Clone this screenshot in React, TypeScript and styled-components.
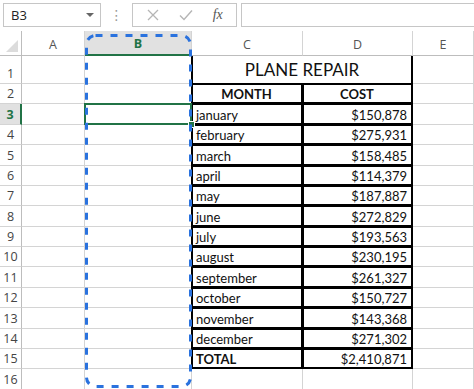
import React from "react";
import styled, { createGlobalStyle, css } from "styled-components";

const GRID = "#d4d4d4";
const GREEN = "#217346";
const UI_FONT = `"Open Sans", "Noto Sans", sans-serif`;
const CELL_FONT = `Lato, "Open Sans", sans-serif`;

const GlobalStyle = createGlobalStyle`
  html, body {
    margin: 0;
    padding: 0;
    background: #fff;
    overflow: hidden;
  }
`;

const Frame = styled.div`
  width: 474px;
  height: 389px;
  overflow: hidden;
  background: #fff;
`;

const FormulaBar = styled.div`
  display: flex;
  align-items: flex-start;
  height: 31px;
  padding: 3px 0 0 3px;
  box-sizing: border-box;
`;

const NameBox = styled.div`
  display: flex;
  align-items: center;
  justify-content: space-between;
  width: 98px;
  height: 24px;
  box-sizing: border-box;
  border: 1px solid #c6c6c6;
  padding: 0 6px 0 7px;
  font-family: ${UI_FONT};
  font-size: 13px;
  color: #222;
`;

const Caret = styled.span`
  width: 0;
  height: 0;
  border-left: 4px solid transparent;
  border-right: 4px solid transparent;
  border-top: 4px solid #666;
`;

const Grip = styled.div`
  width: 31px;
  height: 24px;
  display: flex;
  align-items: center;
  justify-content: center;
  color: #9a9a9a;
  font-size: 14px;
  font-family: "DejaVu Sans", sans-serif;
`;

const FxBox = styled.div`
  display: flex;
  align-items: center;
  justify-content: space-around;
  width: 105px;
  height: 24px;
  box-sizing: border-box;
  border: 1px solid #c6c6c6;
  padding: 0 4px;
`;

const FxLabel = styled.span`
  font-family: "Liberation Serif", serif;
  font-style: italic;
  font-size: 14px;
  color: #555;
`;

const FormulaInput = styled.div`
  flex: 1;
  height: 24px;
  margin-left: 4px;
  box-sizing: border-box;
  border: 1px solid #c6c6c6;
  border-right: none;
`;

const Sheet = styled.div`
  position: relative;
`;

const Row = styled.div<{ $h: number }>`
  display: grid;
  grid-template-columns: 22px 63px 107px 111px 110px 1fr;
  height: ${(p) => p.$h}px;
`;

const Cell = styled.div`
  position: relative;
  box-sizing: border-box;
  border-right: 1px solid ${GRID};
  border-bottom: 1px solid ${GRID};
`;

const Corner = styled(Cell)`
  border-right-color: #bdbdbd;
  border-bottom-color: #bdbdbd;
  &::after {
    content: "";
    position: absolute;
    right: 3px;
    bottom: 3px;
    width: 12px;
    height: 12px;
    background: #dcdcdc;
    clip-path: polygon(100% 0, 100% 100%, 0 100%);
  }
`;

const ColHead = styled(Cell)<{ $active?: boolean }>`
  display: flex;
  align-items: center;
  justify-content: center;
  padding-top: 2px;
  font-family: ${UI_FONT};
  font-size: 12.5px;
  color: #555;
  border-bottom-color: #bdbdbd;
  ${(p) =>
    p.$active &&
    css`
      background: #e1e1e1;
      color: ${GREEN};
      font-weight: 700;
      border-bottom: 2px solid ${GREEN};
    `}
`;

const RowHead = styled(Cell)<{ $active?: boolean }>`
  display: flex;
  align-items: flex-end;
  justify-content: center;
  padding-bottom: 1px;
  font-family: ${UI_FONT};
  font-size: 12.5px;
  color: #444;
  border-right-color: #bdbdbd;
  ${(p) =>
    p.$active &&
    css`
      background: #e1e1e1;
      color: ${GREEN};
      font-weight: 700;
      border-right: 2px solid ${GREEN};
    `}
`;

const Selected = styled(Cell)`
  &::after {
    content: "";
    position: absolute;
    inset: -1px -1px -1px -1px;
    border: 2px solid ${GREEN};
    z-index: 2;
  }
  &::before {
    content: "";
    position: absolute;
    right: -4px;
    bottom: -4px;
    width: 5px;
    height: 5px;
    background: ${GREEN};
    border: 1px solid #fff;
    z-index: 3;
  }
`;

const Title = styled(Cell)`
  grid-column: span 2;
  display: flex;
  align-items: flex-end;
  justify-content: center;
  padding-bottom: 3px;
  font-family: ${CELL_FONT};
  font-size: 17px;
  color: #111;
  &::after {
    content: "";
    position: absolute;
    top: 0;
    bottom: -1px;
    left: -1px;
    right: -1px;
    border-left: 2px solid #000;
    border-right: 2px solid #000;
    z-index: 1;
  }
`;

const DataCell = styled(Cell)<{ $align?: "left" | "right" | "center"; $bold?: boolean }>`
  display: flex;
  align-items: flex-end;
  justify-content: ${(p) =>
    p.$align === "right" ? "flex-end" : p.$align === "center" ? "center" : "flex-start"};
  padding: 0 5px 1px 4px;
  font-family: ${CELL_FONT};
  font-size: 13px;
  font-weight: ${(p) => (p.$bold ? 700 : 400)};
  color: #111;
  white-space: nowrap;
  &::after {
    content: "";
    position: absolute;
    inset: -1px;
    border: 2px solid #000;
    z-index: 1;
  }
`;

const Marquee = styled.svg`
  position: absolute;
  left: 0;
  top: 0;
  z-index: 4;
  pointer-events: none;
`;

const months: [string, string][] = [
  ["january", "$150,878"],
  ["february", "$275,931"],
  ["march", "$158,485"],
  ["april", "$114,379"],
  ["may", "$187,887"],
  ["june", "$272,829"],
  ["july", "$193,563"],
  ["august", "$230,195"],
  ["september", "$261,327"],
  ["october", "$150,727"],
  ["november", "$143,368"],
  ["december", "$271,302"],
];

const ROW_H = 20.38;

const App = () => {
  return (
    <Frame>
      <GlobalStyle />
      <FormulaBar>
        <NameBox>
          B3
          <Caret />
        </NameBox>
        <Grip>⋮</Grip>
        <FxBox>
          <svg width="14" height="14" viewBox="0 0 14 14">
            <path d="M2 2 L12 12 M12 2 L2 12" stroke="#b5b5b5" strokeWidth="1.3" fill="none" />
          </svg>
          <svg width="16" height="14" viewBox="0 0 16 14">
            <path d="M2 7.5 L6 11.5 L14 2.5" stroke="#b5b5b5" strokeWidth="1.4" fill="none" />
          </svg>
          <FxLabel>fx</FxLabel>
        </FxBox>
        <FormulaInput />
      </FormulaBar>

      <Sheet>
        <Row $h={25}>
          <Corner />
          <ColHead>A</ColHead>
          <ColHead $active>B</ColHead>
          <ColHead>C</ColHead>
          <ColHead>D</ColHead>
          <ColHead>E</ColHead>
        </Row>
        <Row $h={28}>
          <RowHead>1</RowHead>
          <Cell />
          <Cell />
          <Title>PLANE REPAIR</Title>
          <Cell />
        </Row>
        <Row $h={ROW_H}>
          <RowHead>2</RowHead>
          <Cell />
          <Cell />
          <DataCell $align="center" $bold>MONTH</DataCell>
          <DataCell $align="center" $bold>COST</DataCell>
          <Cell />
        </Row>
        {months.map(([m, cost], i) => (
          <Row $h={ROW_H} key={m}>
            <RowHead $active={i === 0}>{i + 3}</RowHead>
            <Cell />
            {i === 0 ? <Selected /> : <Cell />}
            <DataCell>{m}</DataCell>
            <DataCell $align="right">{cost}</DataCell>
            <Cell />
          </Row>
        ))}
        <Row $h={ROW_H}>
          <RowHead>15</RowHead>
          <Cell />
          <Cell />
          <DataCell $bold>TOTAL</DataCell>
          <DataCell $align="right">$2,410,871</DataCell>
          <Cell />
        </Row>
        <Row $h={ROW_H}>
          <RowHead>16</RowHead>
          <Cell />
          <Cell />
          <Cell />
          <Cell />
          <Cell />
        </Row>

        <Marquee width="474" height="358" viewBox="0 0 474 358">
          <rect
            x="86.5"
            y="4.5"
            width="104"
            height="351"
            rx="9"
            fill="none"
            stroke="#2a72de"
            strokeWidth="3"
            strokeDasharray="7 8"
          />
        </Marquee>
      </Sheet>
    </Frame>
  );
};

export default App;
